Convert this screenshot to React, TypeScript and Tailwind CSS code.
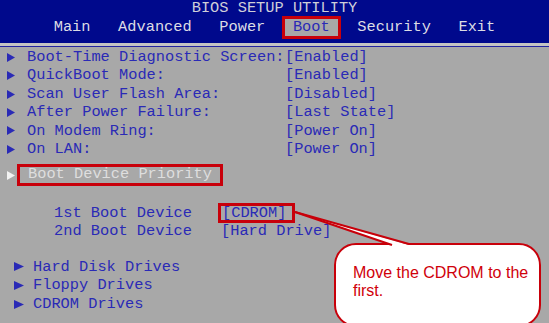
import React from 'react';

const settings = [
  { label: 'Boot-Time Diagnostic Screen:', value: '[Enabled]' },
  { label: 'QuickBoot Mode:', value: '[Enabled]' },
  { label: 'Scan User Flash Area:', value: '[Disabled]' },
  { label: 'After Power Failure:', value: '[Last State]' },
  { label: 'On Modem Ring:', value: '[Power On]' },
  { label: 'On LAN:', value: '[Power On]' },
];

const tabs = ['Main', 'Advanced', 'Power', 'Boot', 'Security', 'Exit'];

function Arrow({ color = '#2a2ab6', w = 8, h = 9 }: { color?: string; w?: number; h?: number }) {
  return (
    <svg width={w} height={h} viewBox={`0 0 ${w} ${h}`} className="shrink-0">
      <polygon points={`0,0 ${w},${h / 2} 0,${h}`} fill={color} />
    </svg>
  );
}

export default function App() {
  return (
    <div
      className="relative h-[323px] w-[549px] overflow-hidden bg-[#a8a8a8] text-[15.33px] leading-[18.4px] text-[#2a2ab6]"
      style={{ fontFamily: '"Liberation Mono", "Courier New", monospace' }}
    >
      {/* header */}
      <div className="flex h-[43px] flex-col items-center bg-[#00098c]">
        <div className="leading-[16px] text-[#cfcfd8]">BIOS SETUP UTILITY</div>
        <div className="flex gap-[27.6px] leading-[17.3px] text-[#dcdce4]">
          {tabs.map((t) =>
            t === 'Boot' ? (
              <span
                key={t}
                className="-mx-[11px] border-[3px] border-[#c8000a] bg-[#a8a8a8] px-[8px] text-[#2a2ab6]"
              >
                {t}
              </span>
            ) : (
              <span key={t} className="py-[3px]">
                {t}
              </span>
            )
          )}
        </div>
      </div>
      <div className="h-[3px] bg-[#c4c4c4]" />
      <div className="h-[1px] bg-[#2424a0]" />

      {/* settings */}
      <div className="pt-[1px]">
        {settings.map((s) => (
          <div key={s.label} className="flex items-center pl-[7px]">
            <Arrow />
            <span className="ml-[12px] w-[258px] whitespace-pre">{s.label}</span>
            <span>{s.value}</span>
          </div>
        ))}
      </div>

      <div className="mt-[6px] flex items-center pl-[7px]">
        <Arrow color="#f2f2f2" />
        <span className="ml-[2px] border-[3px] border-[#c8000a] pl-[8px] pr-[8px] leading-[15.4px] text-[#dedede]">
          Boot Device Priority
        </span>
      </div>

      <div className="mt-[18px] pl-[54px]">
        <div className="flex h-[18.4px] items-center">
          <span className="w-[164px]">1st Boot Device</span>
          <span className="border-[3px] border-[#c8000a] pl-[1px] pr-[6px] leading-[14.7px]">
            [CDROM]
          </span>
        </div>
        <div className="flex items-center">
          <span className="w-[167px]">2nd Boot Device</span>
          <span>[Hard Drive]</span>
        </div>
      </div>

      <div className="mt-[17px] pl-[14px]">
        {['Hard Disk Drives', 'Floppy Drives', 'CDROM Drives'].map((d) => (
          <div key={d} className="flex h-[18.7px] items-center">
            <Arrow w={10} h={9} />
            <span className="ml-[9px]">{d}</span>
          </div>
        ))}
      </div>

      {/* callout */}
      <div
        className="absolute left-[334px] top-[243px] h-[84px] w-[207px] rounded-[22px] border-2 border-[#c8000a] bg-white pl-[17px] pt-[19px] text-[16px] leading-[18px] text-[#d0000a]"
        style={{ fontFamily: '"Liberation Sans", Arial, sans-serif' }}
      >
        Move the CDROM to the first.
      </div>
      <svg className="absolute left-0 top-0" width="549" height="323" viewBox="0 0 549 323">
        <polygon points="295,212 392,245 409,245" fill="#ffffff" />
        <line x1="295" y1="212" x2="392" y2="245" stroke="#c8000a" strokeWidth="2" />
        <line x1="295" y1="212" x2="409" y2="244" stroke="#c8000a" strokeWidth="2" />
      </svg>
    </div>
  );
}
